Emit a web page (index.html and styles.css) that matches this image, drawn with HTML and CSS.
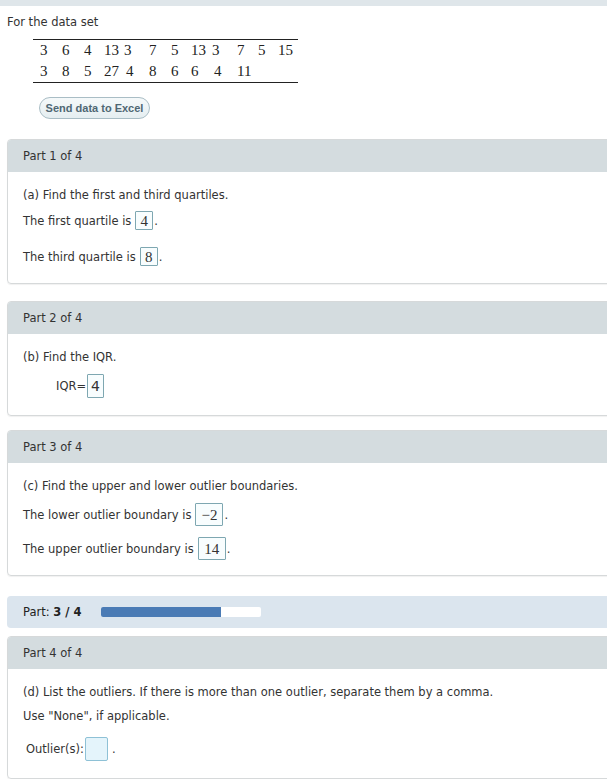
FILE: index.html
```html
<!DOCTYPE html>
<html>
<head>
<meta charset="utf-8">
<link rel="stylesheet" href="styles.css">
</head>
<body>
<div class="topbar"></div>
<div class="page">
  <div class="intro">For the data set</div>
  <table class="data">
    <colgroup>
      <col class="w22"><col class="w22"><col class="w20"><col class="w20"><col class="w25"><col class="w22"><col class="w20"><col class="w21"><col class="w25"><col class="w21"><col class="w20"><col class="w27">
    </colgroup>
    <tr><td>3</td><td>6</td><td>4</td><td>13</td><td>3</td><td>7</td><td>5</td><td>13</td><td>3</td><td>7</td><td>5</td><td>15</td></tr>
    <tr><td>3</td><td>8</td><td>5</td><td>27</td><td class="nudge">4</td><td>8</td><td>6</td><td>6</td><td class="nudge">4</td><td>11</td><td></td><td></td></tr>
  </table>
  <div class="btn-row"><span class="excel-btn">Send data to Excel</span></div>

  <section class="card card1">
    <div class="card-head">Part 1 of 4</div>
    <div class="card-body">
      <div class="line">(a) Find the first and third quartiles.</div>
      <div class="line ans-line r2">The first quartile is <span class="ans serif">4</span>.</div>
      <div class="line ans-line r3">The third quartile is <span class="ans serif">8</span>.</div>
    </div>
  </section>

  <section class="card card2">
    <div class="card-head">Part 2 of 4</div>
    <div class="card-body">
      <div class="line">(b) Find the IQR.</div>
      <div class="line ans-line iqr">IQR=<span class="ans sans tall">4</span></div>
    </div>
  </section>

  <section class="card card3">
    <div class="card-head">Part 3 of 4</div>
    <div class="card-body body3">
      <div class="line">(c) Find the upper and lower outlier boundaries.</div>
      <div class="line ans-line r2b">The lower outlier boundary is <span class="ans serif wide">&minus;2</span>.</div>
      <div class="line ans-line r3b">The upper outlier boundary is <span class="ans serif wide">14</span>.</div>
    </div>
  </section>

  <div class="progress">
    <span class="plabel">Part: <b>3 / 4</b></span>
    <span class="pbar"><span class="pfill"></span></span>
  </div>

  <section class="card card4">
    <div class="card-head">Part 4 of 4</div>
    <div class="card-body">
      <div class="line">(d) List the outliers. If there is more than one outlier, separate them by a comma.</div>
      <div class="line use">Use "None", if applicable.</div>
      <div class="line ans-line outl">Outlier(s):<span class="empty-input"></span>.</div>
    </div>
  </section>
</div>
</body>
</html>
```

FILE: styles.css
```css
html, body {
  margin: 0;
  padding: 0;
  background: #ffffff;
  overflow: hidden;
}
body {
  font-family: "DejaVu Sans", Verdana, sans-serif;
  font-size: 11.5px;
  color: #333333;
}
.topbar {
  height: 6px;
  background: #dfe6ea;
}
.page {
  padding-left: 7px;
}
.intro {
  line-height: 16px;
  margin-top: 8px;
}
.data {
  border-collapse: collapse;
  table-layout: fixed;
  width: 265px;
  margin-left: 26px;
  margin-top: 9px;
  border-top: 1px solid #222;
  border-bottom: 1px solid #222;
  font-family: "Liberation Serif", "Times New Roman", serif;
  font-size: 15px;
  color: #222;
}
.w20 { width: 20px; }
.w21 { width: 21px; }
.w22 { width: 22px; }
.w25 { width: 25px; }
.w27 { width: 27px; }
.data td {
  height: 21px;
  padding: 0 0 0 7px;
  text-align: left;
  line-height: 21px;
  white-space: nowrap;
}
.data td.nudge {
  padding-left: 9px;
}
.btn-row {
  margin-top: 14px;
  padding-left: 32px;
}
.excel-btn {
  display: inline-flex;
  align-items: center;
  justify-content: center;
  width: 109px;
  height: 20px;
  border: 1px solid #a9bdc5;
  border-radius: 11px;
  background: linear-gradient(#f5f9fa, #e5eef1);
  font-family: "Liberation Sans", Arial, sans-serif;
  font-weight: bold;
  font-size: 11px;
  color: #4f6773;
}
.card {
  width: 660px;
  border: 1px solid #d6d9da;
  border-radius: 4px;
  overflow: hidden;
  box-shadow: 0 1px 1px rgba(0,0,0,0.06);
}
.card1 { margin-top: 20px; }
.card2 { margin-top: 17px; }
.card3 { margin-top: 14px; }
.card4 { margin-top: 8px; }
.card-head {
  height: 32px;
  background: #d4dcdf;
  display: flex;
  align-items: center;
  padding-left: 15px;
}
.card-body {
  padding: 15px 15px 17px 15px;
}
.card-body.body3 {
  padding-bottom: 15px;
}
.line {
  line-height: 16px;
  display: flex;
  align-items: center;
}
.ans {
  display: inline-flex;
  align-items: center;
  justify-content: center;
  box-sizing: border-box;
  border: 1px solid #7ea7b1;
  background: #f8fdfe;
  border-radius: 1px;
  margin-left: 4px;
  margin-right: 1px;
  color: #333;
}
.serif {
  font-family: "Liberation Serif", "Times New Roman", serif;
  font-size: 15px;
  width: 18px;
  height: 19px;
}
.serif.wide {
  width: 28px;
  height: 23px;
}
.sans {
  font-size: 14px;
}
.tall {
  width: 17px;
  height: 24px;
  margin-left: 1px;
}
.r2 { margin-top: 8px; }
.r3 { margin-top: 17px; }
.r2b { margin-top: 9px; }
.r3b { margin-top: 11px; }
.iqr { margin-top: 9px; padding-left: 33px; }
.use { margin-top: 8px; }
.outl { margin-top: 13px; padding-left: 3px; }
.empty-input {
  display: inline-block;
  box-sizing: border-box;
  width: 23px;
  height: 24px;
  border: 1px solid #8ec1d6;
  background: #e4f4fb;
  border-radius: 2px;
  margin-left: 1px;
  margin-right: 4px;
}
.progress {
  margin-top: 20px;
  width: 660px;
  height: 32px;
  background: #dbe5ee;
  border-radius: 4px;
  display: flex;
  align-items: center;
  padding-left: 16px;
  box-sizing: border-box;
}
.plabel {
  width: 78px;
  color: #222;
}
.plabel b {
  font-weight: bold;
}
.pbar {
  display: inline-block;
  width: 160px;
  height: 10px;
  background: #ffffff;
  border-radius: 2px;
  overflow: hidden;
}
.pfill {
  display: block;
  width: 120px;
  height: 10px;
  background: #4a7bb5;
}
```
